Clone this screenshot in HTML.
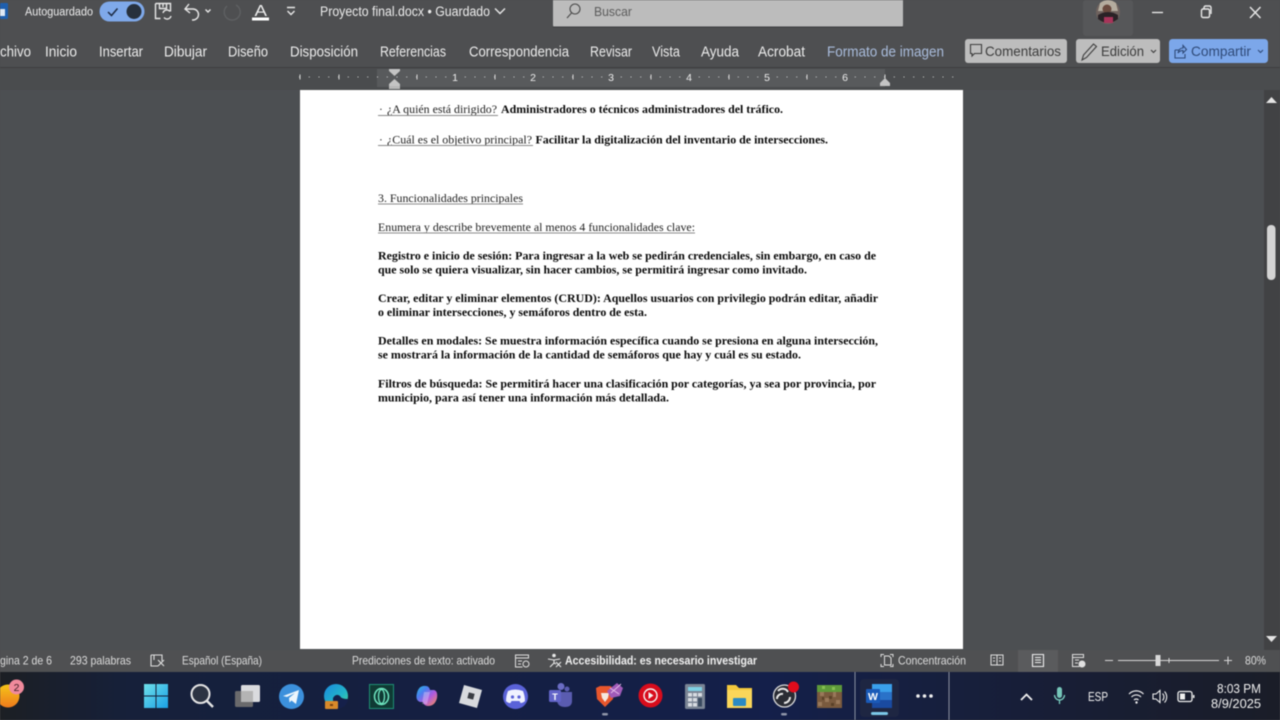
<!DOCTYPE html>
<html lang="es"><head><meta charset="utf-8"><title>Proyecto final.docx</title>
<style>
html,body{margin:0;padding:0;width:1280px;height:720px;overflow:hidden;background:#4b4d50}
svg{display:block;filter:blur(.4px)}
text{font-family:"Liberation Sans",sans-serif;white-space:pre}
.r{font-size:14.5px;fill:#ececec}
.s{font-size:12px;fill:#dcdcdc}
.d{font-family:"Liberation Serif",serif;font-size:11.5px;fill:#222}
.b{font-family:"Liberation Serif",serif;font-size:11.5px;font-weight:bold;fill:#0a0a0a}
.i{fill:none;stroke:#e8e8e8;stroke-width:1.4}
</style></head><body>
<svg width="1280" height="720" viewBox="0 0 1280 720" xmlns="http://www.w3.org/2000/svg">
<defs>
<linearGradient id="tb" x1="0" x2="1" y1="0" y2="0"><stop offset="0" stop-color="#1c1f24"/><stop offset=".1" stop-color="#16203a"/><stop offset=".6" stop-color="#141f4a"/><stop offset=".75" stop-color="#171f3c"/><stop offset="1" stop-color="#1a1d28"/></linearGradient>
<linearGradient id="orb" x1="0" x2="0" y1="0" y2="1"><stop offset="0" stop-color="#f5c518"/><stop offset="1" stop-color="#ee7a1c"/></linearGradient>
<linearGradient id="edge" x1="0" x2="1" y1="0" y2="1"><stop offset="0" stop-color="#1a8adf"/><stop offset=".6" stop-color="#22b4c8"/><stop offset="1" stop-color="#4ed88c"/></linearGradient>
<linearGradient id="cop" x1="0" x2="1" y1="0" y2="1"><stop offset="0" stop-color="#28c0e0"/><stop offset=".3" stop-color="#4a80f0"/><stop offset=".6" stop-color="#b05ae0"/><stop offset="1" stop-color="#f8904c"/></linearGradient>
<linearGradient id="win" x1="0" x2="1" y1="0" y2="1"><stop offset="0" stop-color="#6fe0ea"/><stop offset="1" stop-color="#1aa0e6"/></linearGradient>
</defs>

<!-- base -->
<rect width="1280" height="720" fill="#4b4d50"/>
<rect y="0" width="1280" height="67" fill="#4e4f51"/>
<rect y="67" width="1280" height="1" fill="#3d3e40"/>
<rect y="68" width="1280" height="22" fill="#4a4c4e"/>
<rect y="90" width="1264" height="560" fill="#4c4f52"/>
<rect x="1264" y="90" width="16" height="560" fill="#414244"/>
<rect x="300" y="90" width="663" height="559" fill="#fff"/>

<!-- title bar -->
<rect x="0" y="3" width="8" height="16" rx="1" fill="#1f5fae"/>
<rect x="0" y="9" width="5" height="7" fill="#dfe8f4"/>
<text x="25" y="15.500" font-size="11.5" fill="#ececec" textLength="68" lengthAdjust="spacingAndGlyphs">Autoguardado</text>
<rect x="99.500" y="1.500" width="45" height="20" rx="10" fill="#7fa9ea"/>
<path d="M108 12l3.500 3.500 6-7" fill="none" stroke="#1c2a44" stroke-width="1.500"/>
<circle cx="134" cy="11.500" r="7.500" fill="#27303c"/>
<path d="M155.500 3.500h15v8M155.500 3.500v15h5M159.500 3.500v5h7v-5M163 4v3" class="i" stroke-width="1.300"/>
<path d="M171 16a4 4 0 0 1-7 1.500M163 13a4 4 0 0 1 7-1.500" class="i" stroke-width="1.200"/>
<path d="M186 9h7a5.500 5.500 0 0 1 0 11h-1M189 4l-4 5 5 4" class="i" stroke-width="1.600"/>
<path d="M205.500 9.500l2.500 2.500 2.500-2.500" class="i" stroke-width="1.200"/>
<path d="M236 5a8 8 0 1 1-9 1" fill="none" stroke="#5f6163" stroke-width="1.300"/>
<text x="254.500" y="16" font-size="16" fill="#efefef" textLength="12.500" lengthAdjust="spacingAndGlyphs">A</text>
<rect x="252" y="17.500" width="17" height="3" fill="#fff"/>
<path d="M287 7.500h8M287.500 11l3.500 3.500 3.500-3.500" class="i" stroke-width="1.200"/>
<text x="320" y="16" font-size="13.5" fill="#ececec" textLength="170" lengthAdjust="spacingAndGlyphs">Proyecto final.docx • Guardado</text>
<path d="M495 8.500l5 5 5-5" class="i" stroke-width="1.300"/>
<path d="M553 0h350v25a2 2 0 0 1-2 2H555a2 2 0 0 1-2-2z" fill="#bcbcbc"/>
<path d="M553 27h350" stroke="#3a3b3d" stroke-width="1"/>
<circle cx="575" cy="9" r="5" fill="none" stroke="#4a4a4a" stroke-width="1.100"/>
<path d="M571.500 13l-4.500 5" stroke="#4a4a4a" stroke-width="1.100"/>
<text x="594" y="16" font-size="13" fill="#5c5c5c" textLength="38" lengthAdjust="spacingAndGlyphs">Buscar</text>
<rect x="1083" y="0" width="50" height="36" rx="3" fill="#565759"/>
<circle cx="1108" cy="12" r="12" fill="#6f625e"/>
<path d="M1100 3q8-6 16 0l2 8h-20z" fill="#b4ac9e"/>
<circle cx="1107" cy="9" r="4.500" fill="#6a4a3e"/>
<path d="M1098 15q10-6 20 0v4q-10 8-20 0z" fill="#2a2226"/>
<rect x="1104" y="17" width="9" height="6" fill="#a8345a"/>
<path d="M1152 12.500h11" stroke="#f0f0f0" stroke-width="1.300"/>
<rect x="1201.500" y="9" width="8" height="8.500" rx="1.500" class="i" stroke-width="1.200"/>
<path d="M1204 9V7.500a1.500 1.500 0 0 1 1.500-1.500h4a1.500 1.500 0 0 1 1.500 1.500V14" class="i" stroke-width="1.100"/>
<path d="M1250 7l10.500 11M1260.500 7l-10.500 11" class="i" stroke-width="1.300"/>

<!-- ribbon tabs -->
<text class="r" x="0" y="56.500" textLength="31" lengthAdjust="spacingAndGlyphs">chivo</text>
<text class="r" x="45" y="56.500" textLength="32" lengthAdjust="spacingAndGlyphs">Inicio</text>
<text class="r" x="99" y="56.500" textLength="44" lengthAdjust="spacingAndGlyphs">Insertar</text>
<text class="r" x="164" y="56.500" textLength="43" lengthAdjust="spacingAndGlyphs">Dibujar</text>
<text class="r" x="228" y="56.500" textLength="40" lengthAdjust="spacingAndGlyphs">Diseño</text>
<text class="r" x="290" y="56.500" textLength="68" lengthAdjust="spacingAndGlyphs">Disposición</text>
<text class="r" x="380" y="56.500" textLength="66" lengthAdjust="spacingAndGlyphs">Referencias</text>
<text class="r" x="469" y="56.500" textLength="100" lengthAdjust="spacingAndGlyphs">Correspondencia</text>
<text class="r" x="590" y="56.500" textLength="42" lengthAdjust="spacingAndGlyphs">Revisar</text>
<text class="r" x="652" y="56.500" textLength="28" lengthAdjust="spacingAndGlyphs">Vista</text>
<text class="r" x="701" y="56.500" textLength="38" lengthAdjust="spacingAndGlyphs">Ayuda</text>
<text class="r" x="758" y="56.500" textLength="47" lengthAdjust="spacingAndGlyphs">Acrobat</text>
<text class="r" x="827" y="56.500" textLength="117" lengthAdjust="spacingAndGlyphs" style="fill:#a9bcdc">Formato de imagen</text>

<!-- ribbon buttons -->
<rect x="965" y="39" width="102" height="24" rx="3" fill="#bdbdbd"/>
<path d="M970.500 44.500h11v9h-7l-2.500 2.500v-2.500h-1.500z" fill="none" stroke="#3c3c3c" stroke-width="1.100"/>
<text x="985" y="56" font-size="14" fill="#3c3c3c" textLength="76" lengthAdjust="spacingAndGlyphs">Comentarios</text>
<rect x="1076" y="39" width="84" height="24" rx="3" fill="#bdbdbd"/>
<path d="M1082 60l1.500-5 10-11 3 2.500-10 11z" fill="none" stroke="#3c3c3c" stroke-width="1.100"/>
<text x="1101" y="56" font-size="14" fill="#3c3c3c" textLength="43" lengthAdjust="spacingAndGlyphs">Edición</text>
<path d="M1151 50l2.500 2.500 2.500-2.500" fill="none" stroke="#3c3c3c" stroke-width="1.100"/>
<rect x="1169" y="39" width="99" height="24" rx="3.500" fill="#7ca7ea"/>
<path d="M1175 50v8h10v-4M1175 50h4M1178 53q1-5 5-5v-2.500l3.500 4-3.500 3.500v-2.500q-3 0-5 2.500z" fill="none" stroke="#2f4a78" stroke-width="1.100"/>
<text x="1191" y="56" font-size="14" fill="#2f4a78" textLength="60" lengthAdjust="spacingAndGlyphs">Compartir</text>
<path d="M1258 50l2.500 2.500 2.500-2.500" fill="none" stroke="#2f4a78" stroke-width="1.100"/>

<!-- ruler -->
<rect x="377" y="69" width="508" height="18" fill="#585a5c"/>
<path d="M299 77H955" stroke="#d0d0d0" stroke-width="1" stroke-dasharray="1 8.750"/>
<path d="M300 74.500v5" stroke="#d8d8d8" stroke-width="1"/>
<path d="M338.500 77H955" stroke="#d8d8d8" stroke-width="5" stroke-dasharray="1 77"/>
<g font-size="10.500" fill="#efefef" text-anchor="middle">
<rect x="451" y="71" width="8" height="12" fill="#585a5c"/><text x="455" y="81">1</text>
<rect x="529" y="71" width="8" height="12" fill="#585a5c"/><text x="533" y="81">2</text>
<rect x="607" y="71" width="8" height="12" fill="#585a5c"/><text x="611" y="81">3</text>
<rect x="685" y="71" width="8" height="12" fill="#585a5c"/><text x="689" y="81">4</text>
<rect x="763" y="71" width="8" height="12" fill="#585a5c"/><text x="767" y="81">5</text>
<rect x="841" y="71" width="8" height="12" fill="#585a5c"/><text x="845" y="81">6</text>
</g>
<path d="M389 69h11v2l-5.500 5-5.500-5zM389 86v-2l5.500-5 5.500 5v2z" fill="#c4c4c4"/>
<rect x="389" y="86" width="11" height="3" fill="#b8b8b8"/>
<path d="M880 86v-3l5-5 5 5v3z" fill="#c4c4c4"/>

<!-- document -->
<text class="d" x="379" y="113">·</text>
<text class="d" x="387" y="113" textLength="110" lengthAdjust="spacingAndGlyphs">¿A quién está dirigido?</text>
<path d="M378 115.500h120" stroke="#8a8a8a"/>
<text class="b" x="501" y="113" textLength="282" lengthAdjust="spacingAndGlyphs">Administradores o técnicos administradores del tráfico.</text>
<text class="d" x="379" y="143.500">·</text>
<text class="d" x="387" y="143.500" textLength="145" lengthAdjust="spacingAndGlyphs">¿Cuál es el objetivo principal?</text>
<path d="M378 145.500h155" stroke="#8a8a8a"/>
<text class="b" x="535.500" y="143.500" textLength="292.500" lengthAdjust="spacingAndGlyphs">Facilitar la digitalización del inventario de intersecciones.</text>
<text class="d" x="378" y="202" textLength="145" lengthAdjust="spacingAndGlyphs">3. Funcionalidades principales</text>
<path d="M378 204h145" stroke="#8a8a8a"/>
<text class="d" x="378" y="231" textLength="317" lengthAdjust="spacingAndGlyphs">Enumera y describe brevemente al menos 4 funcionalidades clave:</text>
<path d="M378 233h317" stroke="#8a8a8a"/>
<text class="b" x="378" y="259.500" textLength="498" lengthAdjust="spacingAndGlyphs">Registro e inicio de sesión: Para ingresar a la web se pedirán credenciales, sin embargo, en caso de</text>
<text class="b" x="378" y="273.500" textLength="429" lengthAdjust="spacingAndGlyphs">que solo se quiera visualizar, sin hacer cambios, se permitirá ingresar como invitado.</text>
<text class="b" x="378" y="302" textLength="500" lengthAdjust="spacingAndGlyphs">Crear, editar y eliminar elementos (CRUD): Aquellos usuarios con privilegio podrán editar, añadir</text>
<text class="b" x="378" y="316" textLength="269" lengthAdjust="spacingAndGlyphs">o eliminar intersecciones, y semáforos dentro de esta.</text>
<text class="b" x="378" y="344.500" textLength="500" lengthAdjust="spacingAndGlyphs">Detalles en modales: Se muestra información específica cuando se presiona en alguna intersección,</text>
<text class="b" x="378" y="358.500" textLength="423" lengthAdjust="spacingAndGlyphs">se mostrará la información de la cantidad de semáforos que hay y cuál es su estado.</text>
<text class="b" x="378" y="387.500" textLength="498" lengthAdjust="spacingAndGlyphs">Filtros de búsqueda: Se permitirá hacer una clasificación por categorías, ya sea por provincia, por</text>
<text class="b" x="378" y="401.500" textLength="291" lengthAdjust="spacingAndGlyphs">municipio, para así tener una información más detallada.</text>

<!-- scrollbar -->
<path d="M1266 103l5.500-6 5.500 6z" fill="#e4e4e4"/>
<rect x="1267" y="225" width="8.500" height="55" rx="4" fill="#d4d4d4"/>
<path d="M1266 636l5.500 6 5.500-6z" fill="#e4e4e4"/>

<!-- status bar -->
<rect y="650" width="1280" height="22" fill="#4f5052"/>
<text class="s" x="0" y="664.500" textLength="52" lengthAdjust="spacingAndGlyphs">gina 2 de 6</text>
<text class="s" x="70" y="664.500" textLength="61" lengthAdjust="spacingAndGlyphs">293 palabras</text>
<path d="M151 655h11v6M151 655v11h7M154 655v5M158 660l6 6M164 660l-6 6" fill="none" stroke="#e0e0e0" stroke-width="1.100"/>
<text class="s" x="182" y="664.500" textLength="80" lengthAdjust="spacingAndGlyphs">Español (España)</text>
<text class="s" x="352" y="664.500" textLength="143" lengthAdjust="spacingAndGlyphs">Predicciones de texto: activado</text>
<path d="M515.500 655h13v3h-13zM515.500 658v9h7M518 661h4M518 664h3" fill="none" stroke="#e0e0e0" stroke-width="1"/>
<circle cx="526" cy="664" r="3" fill="none" stroke="#e0e0e0"/>
<circle cx="554" cy="655.500" r="1.800" fill="#e8e8e8"/>
<path d="M548 659l6 1 6-1M554 660v3l-4 4M554 663l2 1M556 662l5 5M561 662l-5 5" fill="none" stroke="#e8e8e8" stroke-width="1.100"/>
<text class="s" x="565" y="664.500" font-weight="bold" style="fill:#f0f0f0" textLength="192" lengthAdjust="spacingAndGlyphs">Accesibilidad: es necesario investigar</text>
<path d="M881 657v-2.500h3M890 654.500h3v2.500M881 664v2.500h3M890 666.500h3V664" fill="none" stroke="#e0e0e0"/>
<path d="M884.500 656h4.500l2 2v7h-6.500z" fill="none" stroke="#e0e0e0"/>
<text class="s" x="898" y="664.500" textLength="68" lengthAdjust="spacingAndGlyphs">Concentración</text>
<path d="M991 655h6v10h-6zM997 655h6v10h-6zM993 658h2M993 661h2M999 658h2M999 661h2" fill="none" stroke="#e0e0e0"/>
<rect x="1018" y="650" width="40" height="22" fill="#5a5b5d"/>
<path d="M1032.500 654.500h11v12h-11zM1035 657.500h6M1035 660h6M1035 662.500h6" fill="none" stroke="#f0f0f0" stroke-width="1.100"/>
<path d="M1072.500 654.500h11v3h-11zM1072.500 657.500v9h7M1075 660h4M1075 663h3" fill="none" stroke="#e0e0e0"/>
<circle cx="1082" cy="664" r="3.500" fill="#e0e0e0"/>
<path d="M1105 660.500h8" stroke="#d8d8d8"/>
<path d="M1118 660.500h101" stroke="#d8d8d8"/>
<path d="M1169 658v5" stroke="#d8d8d8"/>
<rect x="1155.500" y="655" width="5" height="11" fill="#d8d8d8"/>
<path d="M1224 660.500h8M1228 656.500v8" stroke="#d8d8d8"/>
<text class="s" x="1245" y="664.500" textLength="21" lengthAdjust="spacingAndGlyphs">80%</text>

<!-- taskbar -->
<rect y="672" width="1280" height="48" fill="url(#tb)"/>
<circle cx="8" cy="696" r="11.500" fill="url(#orb)"/>
<circle cx="16.500" cy="687" r="7.500" fill="#f08a9c"/>
<text x="16.500" y="691" font-size="10.500" fill="#3a1a20" text-anchor="middle">2</text>

<!-- start -->
<path d="M144 684h11.500v11.500H144zM156.500 684H168v11.500h-11.500zM144 696.500h11.500V708H144zM156.500 696.500H168V708h-11.500z" fill="url(#win)"/>
<!-- search -->
<circle cx="200.500" cy="694" r="9" fill="#2c3342" stroke="#e4e4e4" stroke-width="2"/>
<path d="M207 701l6 6" stroke="#e4e4e4" stroke-width="2.400"/>
<!-- task view -->
<rect x="235" y="691" width="18" height="16" rx="1.500" fill="#6a6a6c"/>
<rect x="241" y="685" width="19" height="17" rx="1.500" fill="#ececec" opacity=".92"/>
<rect x="241" y="691" width="12" height="11" fill="#b4b4b4"/>
<!-- telegram -->
<circle cx="291.500" cy="696.500" r="12.500" fill="#3c90dc"/>
<path d="M283 696l16-6-3 14-4.500-3.500-2 2-.5-4.500 6-5-8 4z" fill="#eef6fc"/>
<!-- edge -->
<circle cx="336" cy="696" r="12" fill="url(#edge)"/>
<path d="M348 699q-1 7-7 9h-8v-10q3-5 7-2 1 3 8 3z" fill="#15204a"/>
<rect x="325" y="701" width="13" height="8" rx="1" fill="#d88a2a"/>
<rect x="330" y="704" width="3" height="2" fill="#7a4412"/>
<!-- opera gx -->
<rect x="369.500" y="684.500" width="24" height="24" fill="#0f3a34" stroke="#1e8e74"/>
<ellipse cx="381.500" cy="696.500" rx="7" ry="8" fill="none" stroke="#6fe8c2" stroke-width="1.500"/>
<ellipse cx="381.500" cy="696.500" rx="3" ry="7" fill="none" stroke="#6fe8c2" stroke-width="1.300"/>
<!-- copilot -->
<path d="M417 693q2-8 9-7 3 0 4 4l4 0q4 1 3 8-2 8-9 8-4 0-5-4h-3q-5-2-3-9z" fill="url(#cop)"/>
<path d="M424 692h6l-3 12h-5z" fill="#fff" opacity=".3"/>
<!-- roblox -->
<path d="M464 685l18 5-5 18-18-5z" fill="#d8dade"/>
<rect x="468" y="693" width="6" height="6" transform="rotate(15 471 696)" fill="#3a3d44"/>
<!-- discord -->
<circle cx="515.500" cy="696.500" r="12.500" fill="#5a62d8"/>
<path d="M508 691q7-3 15 0 2 5 2 10-2 2-4.500 2l-1-2h-8l-1 2q-3 0-4.500-2 0-5 2-10z" fill="#f0f2ff"/>
<circle cx="512.500" cy="697" r="1.600" fill="#5a62d8"/><circle cx="519" cy="697" r="1.600" fill="#5a62d8"/>
<!-- teams -->
<circle cx="561" cy="686.500" r="3.500" fill="#6a6cc4"/><circle cx="567" cy="689" r="2.500" fill="#5a5cb0"/>
<path d="M557 692h15v9q0 6-7 6t-8-6z" fill="#5a5cb0"/>
<rect x="549" y="690" width="12" height="12" rx="1.500" fill="#6264c8"/>
<text x="555" y="700" font-size="9" font-weight="bold" fill="#fff" text-anchor="middle">T</text>
<!-- brave -->
<path d="M596 688l4-2h10l4 2-1 11-8 8-8-8z" fill="#e8562c"/>
<path d="M601 693h8l-1 5-3 4-3-4z" fill="#f4e8e0"/>
<path d="M607 691l10-8 6 5-3 8-9 2z" fill="#a05ab8"/>
<path d="M610 688l9 6M621 684l-10 9" stroke="#e4b8e8" stroke-width="1"/>
<rect x="602" y="713" width="6" height="2.500" rx="1.200" fill="#8f95a8"/>
<!-- youtube music -->
<circle cx="650.500" cy="695.500" r="12" fill="#d80c1c"/>
<circle cx="650.500" cy="695.500" r="6.500" fill="none" stroke="#f4f4f4" stroke-width="1.400"/>
<path d="M648.500 692l5 3.500-5 3.500z" fill="#f4f4f4"/>
<!-- calculator -->
<rect x="685" y="684" width="20" height="25" rx="1.500" fill="#7a8494"/>
<rect x="688" y="687" width="14" height="4" fill="#7fd0e4"/>
<path d="M688 693h4v3.500h-4zM693 693h4v3.500h-4zM698 693h4v3.500h-4zM688 698h4v3.500h-4zM693 698h4v3.500h-4zM688 703h4v3.500h-4zM693 703h4v3.500h-4z" fill="#d8dce2"/>
<rect x="698" y="698" width="4" height="8.500" fill="#3a4a60"/>
<!-- folder -->
<path d="M727 685h9l3 3h13v20h-25z" fill="#f4c83c"/>
<rect x="727" y="690" width="25" height="18" fill="#fad65a"/>
<rect x="733" y="698" width="13" height="8" rx="1" fill="#2a8ac4"/>
<!-- obs -->
<circle cx="784.500" cy="696" r="11" fill="#2a2c34" stroke="#dcdcdc" stroke-width="1.300"/>
<path d="M778 691a6 6 0 0 1 10 1M790 697a6 6 0 0 1-6 6M777 699a5 5 0 0 1 6-5" fill="none" stroke="#e8e8e8" stroke-width="2"/>
<circle cx="793.500" cy="687" r="5.500" fill="#e00c1c"/>
<rect x="781" y="713" width="6" height="2.500" rx="1.200" fill="#8f95a8"/>
<!-- minecraft -->
<rect x="817" y="685" width="25" height="23" fill="#7a5a3e"/>
<rect x="817" y="685" width="25" height="7" fill="#5e9a3a"/>
<path d="M820 692h4v4h-4zM833 692h3v5h-3zM825 698h4v4h-4zM836 700h4v4h-4zM818 702h4v4h-4z" fill="#99785a"/>
<path d="M822 686h3v3h-3zM832 687h3v3h-3z" fill="#86c052"/>
<path d="M829 696h3v3h-3zM822 697h2v3h-2zM831 703h3v3h-3z" fill="#5a4028"/>

<!-- word active -->
<path d="M855 672v48M949 672v48" stroke="#8a90a0" stroke-width="1"/>
<rect x="860" y="679" width="39" height="38" rx="4" fill="#1e2642"/>
<rect x="872" y="692" width="20" height="8" fill="#2a72c8"/>
<rect x="872" y="684" width="20" height="8" fill="#3aa0ea"/>
<rect x="872" y="700" width="20" height="8" fill="#1a4aa0"/>
<rect x="866" y="689" width="14" height="14" rx="1" fill="#1a5ab8"/>
<text x="873" y="700" font-size="10.500" font-weight="bold" fill="#fff" text-anchor="middle">W</text>
<rect x="871" y="712" width="17" height="3" rx="1.500" fill="#7cc8e8"/>
<!-- overflow -->
<circle cx="918" cy="696" r="1.800" fill="#f0f0f0"/><circle cx="924.500" cy="696" r="1.800" fill="#f0f0f0"/><circle cx="931" cy="696" r="1.800" fill="#f0f0f0"/>

<!-- tray -->
<path d="M1021 700l5.500-5.500 5.500 5.500" fill="none" stroke="#f0f0f0" stroke-width="1.800"/>
<rect x="1057" y="687" width="5" height="11" rx="2.500" fill="#7fd8c8" opacity=".9"/>
<path d="M1054.500 695a5 5 0 0 0 10 0M1059.500 700v4" fill="none" stroke="#7fd8c8" stroke-width="1.200"/>
<text x="1088" y="701" font-size="12.500" fill="#f0f0f0" textLength="20" lengthAdjust="spacingAndGlyphs">ESP</text>
<path d="M1129 694a10 10 0 0 1 14.500 0M1131.500 697a6.500 6.500 0 0 1 9.500 0M1134 700a3 3 0 0 1 4.500 0" fill="none" stroke="#f0f0f0" stroke-width="1.200"/>
<circle cx="1136.500" cy="702.500" r="1.200" fill="#f0f0f0"/>
<path d="M1153 694h3l4-3.500v12l-4-3.500h-3zM1162.500 693.500a5 5 0 0 1 0 7M1164.500 691.500a8 8 0 0 1 0 11" fill="none" stroke="#f0f0f0" stroke-width="1.100"/>
<rect x="1178" y="691.500" width="14" height="10" rx="2" fill="none" stroke="#f0f0f0" stroke-width="1.300"/>
<rect x="1180" y="693.500" width="5" height="6" fill="#f0f0f0"/>
<rect x="1193" y="695" width="1.500" height="3" fill="#f0f0f0"/>
<text x="1261" y="693" font-size="13" fill="#f0f0f0" text-anchor="end" textLength="44" lengthAdjust="spacingAndGlyphs">8:03 PM</text>
<text x="1261" y="708" font-size="13" fill="#f0f0f0" text-anchor="end" textLength="50" lengthAdjust="spacingAndGlyphs">8/9/2025</text>
</svg>
</body></html>
